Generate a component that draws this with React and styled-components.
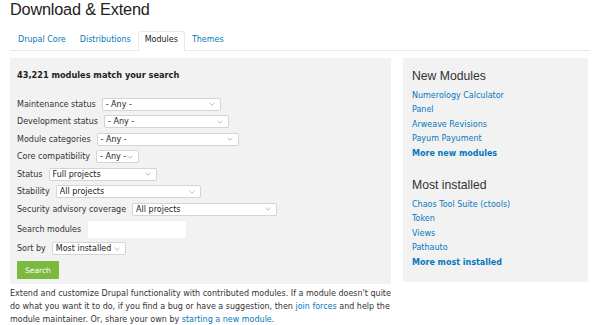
import React from 'react'
import styled, { createGlobalStyle } from 'styled-components'

const GlobalStyle = createGlobalStyle`
  body {
    margin: 0;
    background: #fff;
    font-family: "DejaVu Sans", Verdana, sans-serif;
    color: #333;
  }
`

const tabs = ['Drupal Core', 'Distributions', 'Modules', 'Themes']

const filters = [
  { label: 'Maintenance status', value: '- Any -', width: 119 },
  { label: 'Development status', value: '- Any -', width: 125 },
  { label: 'Module categories', value: '- Any -', width: 142 },
  { label: 'Core compatibility', value: '- Any -', width: 43 },
  { label: 'Status', value: 'Full projects', width: 108 },
  { label: 'Stability', value: 'All projects', width: 145 },
  { label: 'Security advisory coverage', value: 'All projects', width: 145 },
]

const sidebar = [
  {
    title: 'New Modules',
    links: ['Numerology Calculator', 'Panel', 'Arweave Revisions', 'Payum Payument'],
    more: 'More new modules',
  },
  {
    title: 'Most installed',
    links: ['Chaos Tool Suite (ctools)', 'Token', 'Views', 'Pathauto'],
    more: 'More most installed',
  },
]

const Chevron = () => (
  <ChevronIcon width="6" height="4" viewBox="0 0 6 4">
    <path d="M0.5 0.8 L3 3.2 L5.5 0.8" fill="none" stroke="#aaa" strokeWidth="0.8" />
  </ChevronIcon>
)

const Select = ({ value, width }) => (
  <SelectBox style={{ width }}>
    <span>{value}</span>
    <Chevron />
  </SelectBox>
)

const App = () => {
  return (
    <Page>
      <GlobalStyle />
      <Title>Download &amp; Extend</Title>

      <TabBar>
        {tabs.map((t) => (
          <Tab key={t} $active={t === 'Modules'}>{t}</Tab>
        ))}
      </TabBar>

      <Main>
        <Content>
          <SearchPanel>
            <PanelTitle>43,221 modules match your search</PanelTitle>
            <Form>
              {filters.map((f) => (
                <Row key={f.label}>
                  <Label>{f.label}</Label>
                  <Select value={f.value} width={f.width} />
                </Row>
              ))}
              <Row $height={23}>
                <Label>Search modules</Label>
                <TextInput />
              </Row>
              <Row $height={15}>
                <Label>Sort by</Label>
                <Select value="Most installed" width={74} />
              </Row>
              <SearchButton>Search</SearchButton>
            </Form>
          </SearchPanel>

          <Intro>
            Extend and customize Drupal functionality with contributed modules. If a module doesn't quite
            <br />
            do what you want it to do, if you find a bug or have a suggestion, then <Link>join forces</Link> and help the
            <br />
            module maintainer. Or, share your own by <Link>starting a new module</Link>.
          </Intro>
        </Content>

        <Sidebar>
          {sidebar.map((block) => (
            <Block key={block.title}>
              <BlockTitle>{block.title}</BlockTitle>
              {block.links.map((l) => (
                <BlockLink key={l}>{l}</BlockLink>
              ))}
              <BlockLink $bold>{block.more}</BlockLink>
            </Block>
          ))}
        </Sidebar>
      </Main>
    </Page>
  )
}

const Page = styled.div`
  padding: 0 10px;
  width: 580px;
`

const Title = styled.h1`
  margin: 0;
  font-family: "Liberation Sans", Arial, sans-serif;
  font-weight: 400;
  font-size: 16.3px;
  letter-spacing: -0.2px;
  line-height: 19px;
  color: #222;
`

const TabBar = styled.div`
  display: flex;
  margin-top: 12px;
  padding-left: 1px;
  height: 19px;
  border-bottom: 1px solid #e8e8e8;
`

const Tab = styled.div`
  padding: 2.5px 6px 0;
  line-height: 10px;
  font-size: 8px;
  color: ${(p) => (p.$active ? '#222' : '#0678be')};
  background: ${(p) => (p.$active ? '#fff' : 'transparent')};
  border: 1px solid ${(p) => (p.$active ? '#e8e8e8' : 'transparent')};
  border-bottom: none;
  border-radius: 3px 3px 0 0;
  margin-bottom: -1px;
`

const Main = styled.div`
  display: flex;
  align-items: flex-start;
  gap: 12px;
  margin-top: 7px;
`

const Content = styled.div`
  width: 381px;
`

const SearchPanel = styled.div`
  background: #f2f2f2;
  padding: 10px 7px 5px;
`

const PanelTitle = styled.div`
  font-weight: 700;
  font-size: 8.2px;
  line-height: 12px;
  color: #222;
  margin-top: 1px;
`

const Form = styled.div`
  display: flex;
  flex-direction: column;
  margin-top: 14.5px;
`

const Row = styled.div`
  display: flex;
  align-items: center;
  gap: 6px;
  height: ${(p) => p.$height || 17.5}px;
`

const Label = styled.span`
  font-size: 8px;
  color: #333;
  white-space: nowrap;
`

const SelectBox = styled.div`
  box-sizing: border-box;
  height: 13px;
  display: flex;
  align-items: center;
  justify-content: space-between;
  padding: 0 5px 0 3px;
  background: #fff;
  border: 1px solid #d4d4d4;
  border-radius: 2px;
  font-size: 8px;
  color: #222;
  white-space: nowrap;
`

const ChevronIcon = styled.svg`
  flex-shrink: 0;
`

const TextInput = styled.div`
  box-sizing: border-box;
  width: 100px;
  height: 19px;
  background: #fff;
  border: 1px solid #f0f0f0;
`

const SearchButton = styled.div`
  margin-top: 5px;
  width: 42px;
  height: 18px;
  display: flex;
  align-items: center;
  justify-content: center;
  background: #7cb93f;
  border-radius: 1px;
  color: #fff;
  font-size: 7.5px;
`

const Intro = styled.p`
  margin: 3px 0 0;
  font-size: 8px;
  line-height: 13px;
  color: #333;
  white-space: nowrap;
`

const Link = styled.span`
  color: #0678be;
`

const Sidebar = styled.div`
  width: 185px;
  box-sizing: border-box;
  background: #f2f2f2;
  padding: 11px 9px 12px;
  display: flex;
  flex-direction: column;
  gap: 17px;
`

const Block = styled.div`
  display: flex;
  flex-direction: column;
`

const BlockTitle = styled.div`
  font-family: "Liberation Sans", Arial, sans-serif;
  font-size: 12.2px;
  line-height: 15px;
  color: #333;
  margin-bottom: 5px;
`

const BlockLink = styled.div`
  font-size: 8px;
  line-height: 14.4px;
  color: #0678be;
  font-weight: ${(p) => (p.$bold ? 700 : 400)};
`

export default App
